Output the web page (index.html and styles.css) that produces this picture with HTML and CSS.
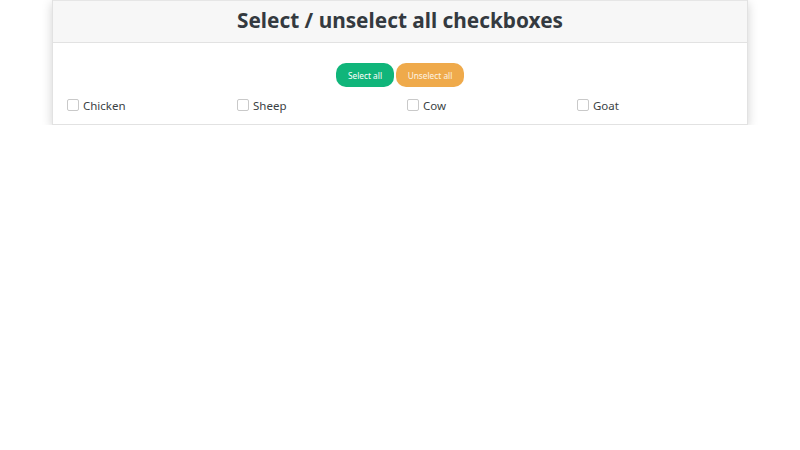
FILE: index.html
```html
<!DOCTYPE html>
<html lang="en">
<head>
<meta charset="utf-8">
<title>Select / unselect all checkboxes</title>
<link rel="stylesheet" href="styles.css">
</head>
<body>
<div class="card">
  <div class="card-header">
    <h1 class="title">Select / unselect all checkboxes</h1>
  </div>
  <div class="card-body">
    <div class="actions">
      <button class="btn btn-select" type="button">Select all</button>
      <button class="btn btn-unselect" type="button">Unselect all</button>
    </div>
    <div class="options">
      <label class="option"><input type="checkbox" class="box"><span>Chicken</span></label>
      <label class="option"><input type="checkbox" class="box"><span>Sheep</span></label>
      <label class="option"><input type="checkbox" class="box"><span>Cow</span></label>
      <label class="option"><input type="checkbox" class="box"><span>Goat</span></label>
    </div>
  </div>
</div>
</body>
</html>
```
FILE: styles.css
```css
html, body {
  margin: 0;
  padding: 0;
  background: #ffffff;
}
body {
  font-family: "Noto Sans", "Open Sans", sans-serif;
  color: #333a40;
}
.card {
  width: 696px;
  margin: 0 auto;
  box-sizing: border-box;
  border: 1px solid #e2e2e2;
  border-top: none;
  background: #fff;
  box-shadow: 0 3px 10px rgba(0, 0, 0, 0.18);
}
.card-header {
  height: 43px;
  box-sizing: border-box;
  background: #f7f7f7;
  border-top: 1px solid #e6e6e6;
  border-bottom: 1px solid #e2e2e2;
  display: flex;
  align-items: center;
  justify-content: center;
}
.title {
  margin: 0 0 2px;
  font-size: 20.8px;
  font-weight: 700;
  color: #343a40;
  line-height: 1;
}
.card-body {
  padding: 20px 0 12px 14px;
}
.actions {
  display: flex;
  justify-content: center;
  gap: 2px;
  padding-right: 14px;
}
.btn {
  height: 24px;
  border: none;
  border-radius: 10px;
  color: #fff;
  font-family: "Noto Sans", "Open Sans", sans-serif;
  font-size: 8.3px;
  padding: 0;
  white-space: nowrap;
  cursor: pointer;
}
.btn-select {
  background: #10b57a;
  width: 58px;
}
.btn-unselect {
  background: #efaa4b;
  width: 68px;
  color: #fdf3e4;
}
.options {
  display: grid;
  grid-template-columns: repeat(4, 1fr);
  margin-top: 11px;
}
.option {
  display: flex;
  align-items: center;
  gap: 4px;
  font-size: 11.5px;
  color: #3a3f44;
  height: 14px;
}
.box {
  appearance: none;
  -webkit-appearance: none;
  width: 12px;
  height: 12px;
  margin: 0;
  border: 1px solid #c9c9c9;
  border-radius: 2px;
  background: #fff;
}
```
